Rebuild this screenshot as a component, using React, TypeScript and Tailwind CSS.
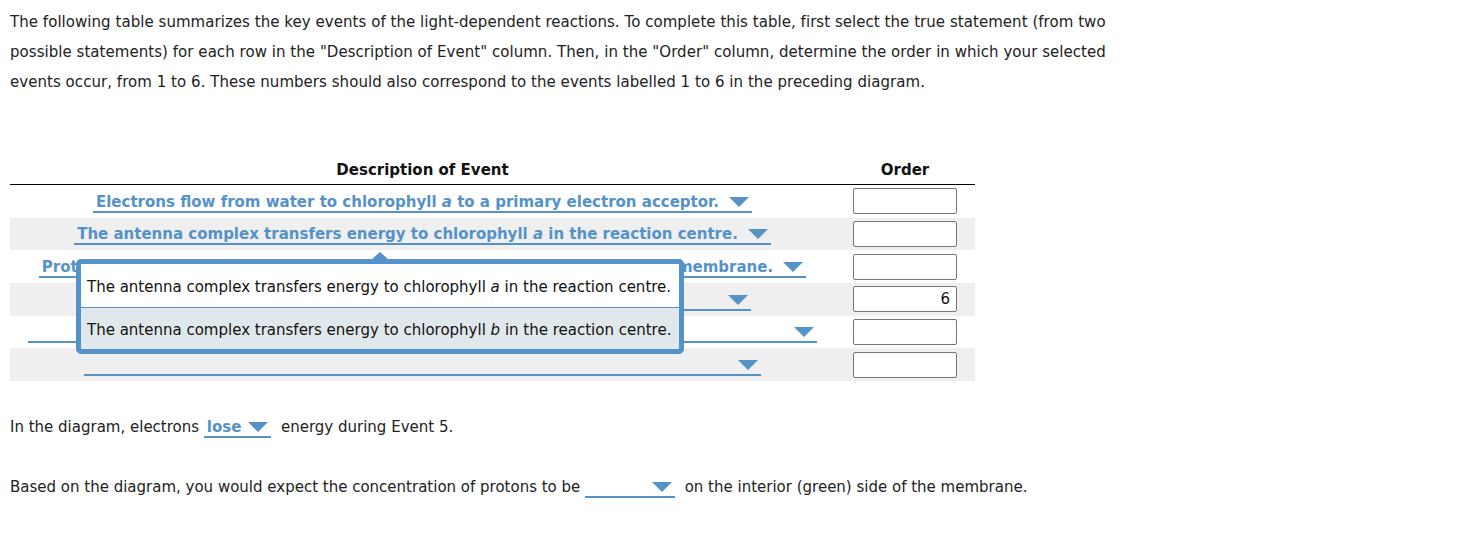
import React from "react";

const BLUE = "#5592c8";

function Tri() {
  return (
    <svg width="20" height="10" viewBox="0 0 20 10" className="shrink-0">
      <polygon points="0,0 20,0 10,10" fill={BLUE} />
    </svg>
  );
}

function Drop({ children, w, gap = 10 }: { children?: React.ReactNode; w?: string; gap?: number }) {
  return (
    <span
      className={`inline-flex items-center justify-end border-b-2 border-[#5592c8] pl-[3px] pr-[3px] h-[20px] mt-[3px] ${w ?? ""}`}
      style={{ gap }}
    >
      {children ? (
        <span className="font-bold text-[#5592c8] whitespace-nowrap leading-[18px]">{children}</span>
      ) : null}
      <Tri />
    </span>
  );
}

function Row({ gray, children, value }: { gray?: boolean; children: React.ReactNode; value?: string }) {
  return (
    <div className={`flex h-[32.67px] items-center ${gray ? "bg-[#efefef]" : "bg-white"}`}>
      <div className="w-[825px] flex justify-center items-center">{children}</div>
      <div className="w-[140px] flex justify-center items-center">
        <div className="w-[104px] h-[26px] border border-[#767676] rounded-[2px] bg-white flex items-center justify-end pr-[6px] text-[15px] text-[#111]">
          {value}
        </div>
      </div>
    </div>
  );
}

export default function App() {
  return (
    <div
      className="bg-white w-[1465px] h-[533px] pt-[7px] px-[10px] text-[15px] text-[#222]"
      style={{ fontFamily: '"DejaVu Sans", Verdana, sans-serif' }}
    >
      <p className="leading-[30px] whitespace-nowrap tracking-[0.045px]">
        The following table summarizes the key events of the light-dependent reactions. To complete this table, first select the true statement (from two
        <br />
        possible statements) for each row in the "Description of Event" column. Then, in the "Order" column, determine the order in which your selected
        <br />
        events occur, from 1 to 6. These numbers should also correspond to the events labelled 1 to 6 in the preceding diagram.
      </p>

      <div className="relative mt-[59px] w-[965px]">
        <div className="flex h-[29px] items-center border-b border-black font-bold text-[#111]">
          <div className="w-[825px] text-center">Description of Event</div>
          <div className="w-[140px] text-center">Order</div>
        </div>
        <Row>
          <Drop>
            Electrons flow from water to chlorophyll <i>a</i> to a primary electron acceptor.
          </Drop>
        </Row>
        <Row gray>
          <Drop>
            The antenna complex transfers energy to chlorophyll <i>a</i> in the reaction centre.
          </Drop>
        </Row>
        <Row>
          <Drop>Protons are pumped from the stroma, into the thylakoid space, across the membrane.</Drop>
        </Row>
        <Row gray value="6">
          <Drop w="w-[657px]" />
        </Row>
        <Row>
          <Drop w="w-[789px]" />
        </Row>
        <Row gray>
          <Drop w="w-[677px]" />
        </Row>

        {/* popup */}
        <div className="absolute left-[66px] top-[103px] w-[608px] z-10">
          <svg width="18" height="8" viewBox="0 0 18 8" className="absolute left-[295px] top-[-7px]">
            <polygon points="0,8 9,0 18,8" fill={BLUE} />
          </svg>
          <div className="border-[5px] border-[#5592c8] rounded-[5px] bg-white overflow-hidden text-[#111]">
            <div className="h-[44px] flex items-center pl-[6px] pt-[4px] border-b border-[#5592c8] bg-white">
              The antenna complex transfers energy to chlorophyll&nbsp;<i>a</i>&nbsp;in the reaction centre.
            </div>
            <div className="h-[41px] flex items-center pl-[6px] pt-[3px] bg-[#e0e8ec]">
              The antenna complex transfers energy to chlorophyll&nbsp;<i>b</i>&nbsp;in the reaction centre.
            </div>
          </div>
        </div>
      </div>

      <div className="mt-[31px] h-[30px] flex items-center whitespace-nowrap">
        <span>In the diagram, electrons&nbsp;</span>
        <Drop gap={7}>lose</Drop>
        <span>&nbsp;&nbsp;energy during Event 5.</span>
      </div>

      <div className="mt-[30px] h-[30px] flex items-center whitespace-nowrap">
        <span>Based on the diagram, you would expect the concentration of protons to be&nbsp;</span>
        <Drop w="w-[90px]" />
        <span>&nbsp;&nbsp;on the interior (green) side of the membrane.</span>
      </div>
    </div>
  );
}
